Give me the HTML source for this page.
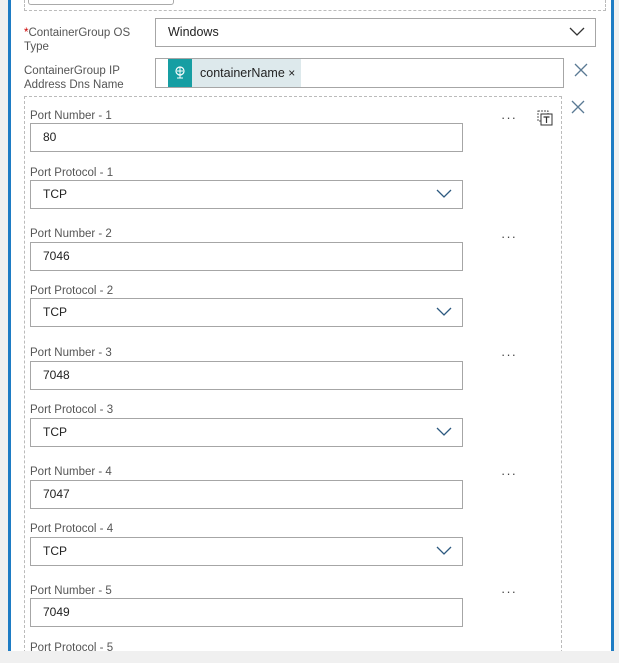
<html style="width:619px;height:663px;overflow:hidden"><head><style>
body{margin:0;width:619px;height:663px;background:#f0f0f0;position:relative;overflow:hidden;font-family:"Segoe UI","Liberation Sans",sans-serif;font-size:12px;color:#222}
.card{position:absolute;left:8px;top:0;width:600px;height:651px;background:#fff;border-left:3px solid #1e7cc4;border-right:3px solid #1e7cc4}
.a{position:absolute}
.lbl{position:absolute;color:#555;font-size:11.5px;line-height:14px}
.inp{position:absolute;border:1px solid #a6a6a6;background:#fff;box-sizing:border-box;font-size:12px;padding-left:12px;line-height:27px;color:#222}
.chev{position:absolute;right:10px;top:8px}
.dots{position:absolute;color:#444;font-size:13px;letter-spacing:1px}
</style></head><body>
<div class="card"></div>
<div class="a" style="left:24px;top:-4px;width:580px;height:14px;border:1px dashed #bbb;border-top:none"></div>
<div class="a" style="left:28px;top:-4px;width:144px;height:8px;border:1px solid #aaa;border-top:none;border-radius:0 0 3px 3px"></div>

<div class="lbl" style="left:24px;top:26px"><span style="color:#c00">*</span>ContainerGroup OS<br>Type</div>
<div class="inp" style="left:155px;top:18px;width:441px;height:29px;font-size:12.5px">Windows<svg class="chev" width="16" height="10"><path d="M1 1L8 8L15 1" fill="none" stroke="#333" stroke-width="1.3"/></svg></div>

<div class="lbl" style="left:24px;top:64px">ContainerGroup IP<br>Address Dns Name</div>
<div class="inp" style="left:155px;top:58px;width:409px;height:30px;padding:0"></div>
<div class="a" style="left:168px;top:59px;width:133px;height:28px;background:#dde9ec"></div>
<div class="a" style="left:168px;top:59px;width:24px;height:28px;background:#169ea3"><svg width="24" height="28"><circle cx="12" cy="12" r="4" fill="none" stroke="#fff" stroke-width="1.2"/><path d="M12 16v3M9 19h6M9 12h6M12 8v8" stroke="#fff" stroke-width="1"/></svg></div>
<div class="a" style="left:200px;top:66px;font-size:12.5px">containerName <span style="font-size:12px">×</span></div>
<svg class="a" style="left:574px;top:63px" width="14" height="14"><path d="M1 1L13 13M13 1L1 13" stroke="#5a7a94" stroke-width="1.3"/></svg>

<div class="a" style="left:24px;top:96px;width:536px;height:560px;border:1px dashed #bbb"></div>
<svg class="a" style="left:571px;top:100px" width="14" height="14"><path d="M1 1L13 13M13 1L1 13" stroke="#5a7a94" stroke-width="1.3"/></svg>
<svg class="a" style="left:537px;top:110px" width="17" height="17"><rect x="1" y="1" width="10" height="10" fill="none" stroke="#555" stroke-dasharray="2 1"/><rect x="4" y="4" width="11" height="11" fill="#fff" stroke="#333"/><path d="M6.5 7h6M9.5 7v6" stroke="#333" stroke-width="1.2"/></svg>

<div class="lbl" style="left:30px;top:109px">Port Number - 1</div>
<div class="inp" style="left:30px;top:123px;width:433px;height:29px">80</div>
<div class="dots" style="left:501px;top:110px">···</div>
<div class="lbl" style="left:30px;top:166px">Port Protocol - 1</div>
<div class="inp" style="left:30px;top:180px;width:433px;height:29px">TCP<svg class="chev" width="16" height="10"><path d="M1 1L8 8L15 1" fill="none" stroke="#2d5a80" stroke-width="1.3"/></svg></div>

<div class="lbl" style="left:30px;top:227px">Port Number - 2</div>
<div class="inp" style="left:30px;top:242px;width:433px;height:29px">7046</div>
<div class="dots" style="left:501px;top:229px">···</div>
<div class="lbl" style="left:30px;top:284px">Port Protocol - 2</div>
<div class="inp" style="left:30px;top:298px;width:433px;height:29px">TCP<svg class="chev" width="16" height="10"><path d="M1 1L8 8L15 1" fill="none" stroke="#2d5a80" stroke-width="1.3"/></svg></div>

<div class="lbl" style="left:30px;top:346px">Port Number - 3</div>
<div class="inp" style="left:30px;top:361px;width:433px;height:29px">7048</div>
<div class="dots" style="left:501px;top:347px">···</div>
<div class="lbl" style="left:30px;top:403px">Port Protocol - 3</div>
<div class="inp" style="left:30px;top:418px;width:433px;height:29px">TCP<svg class="chev" width="16" height="10"><path d="M1 1L8 8L15 1" fill="none" stroke="#2d5a80" stroke-width="1.3"/></svg></div>

<div class="lbl" style="left:30px;top:465px">Port Number - 4</div>
<div class="inp" style="left:30px;top:480px;width:433px;height:29px">7047</div>
<div class="dots" style="left:501px;top:466px">···</div>
<div class="lbl" style="left:30px;top:522px">Port Protocol - 4</div>
<div class="inp" style="left:30px;top:537px;width:433px;height:29px">TCP<svg class="chev" width="16" height="10"><path d="M1 1L8 8L15 1" fill="none" stroke="#2d5a80" stroke-width="1.3"/></svg></div>

<div class="lbl" style="left:30px;top:584px">Port Number - 5</div>
<div class="inp" style="left:30px;top:598px;width:433px;height:29px">7049</div>
<div class="dots" style="left:501px;top:584px">···</div>
<div class="lbl" style="left:30px;top:641px">Port Protocol - 5</div>

<div class="a" style="left:0;top:651px;width:619px;height:12px;background:#f0f0f0"></div>
</body></html>
